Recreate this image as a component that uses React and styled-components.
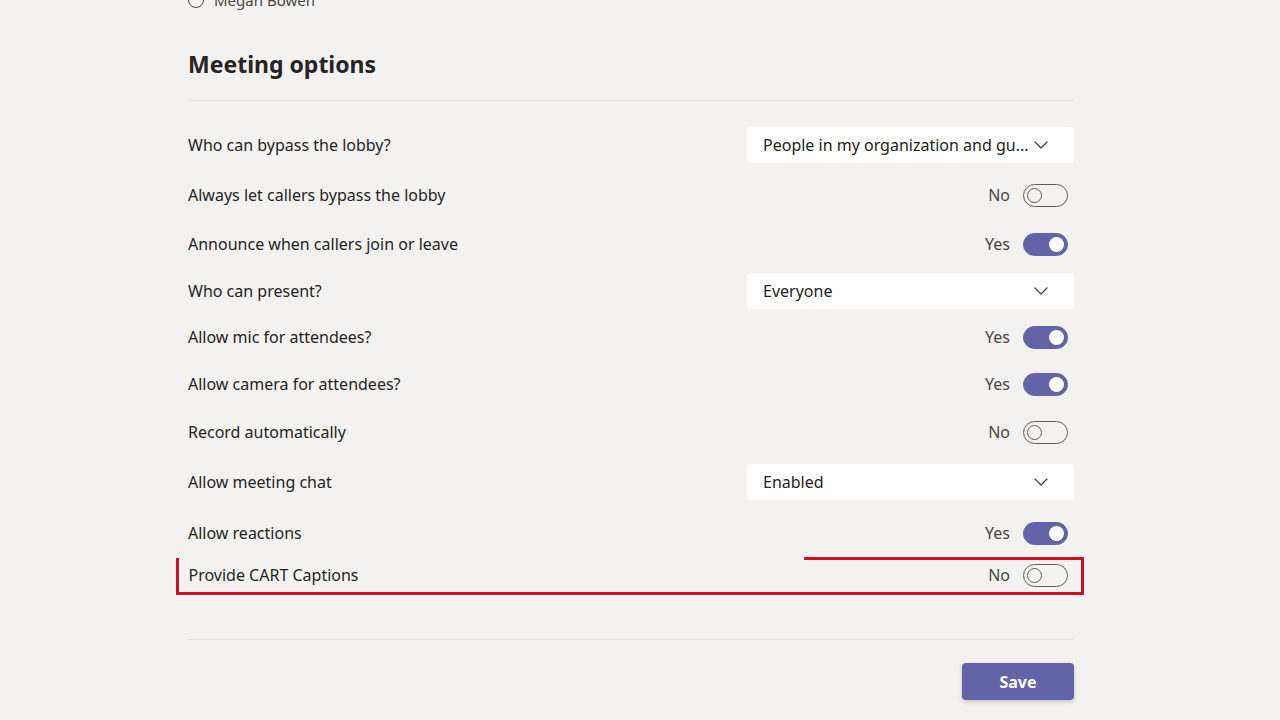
import React from 'react';
import styled, { createGlobalStyle } from 'styled-components';

const GlobalStyle = createGlobalStyle`
  html, body {
    margin: 0;
    padding: 0;
    background: #f3f2f1;
    font-family: "Noto Sans", "Open Sans", sans-serif;
    color: #252423;
  }
`

const Page = styled.div`
  width: 1280px;
  height: 720px;
  overflow: hidden;
  box-sizing: border-box;
  padding-left: 188px;
`

const Column = styled.div`
  width: 886px;
  display: flex;
  flex-direction: column;
  margin-top: -12px;
`

const Person = styled.div`
  display: flex;
  align-items: center;
  gap: 10px;
  height: 24px;
  font-size: 15px;
  color: #484644;
`

const Circle = styled.span`
  width: 14px;
  height: 14px;
  border: 1.5px solid #484644;
  border-radius: 50%;
`

const Title = styled.h1`
  margin: 36px 0 0;
  font-size: 23px;
  font-weight: 700;
  line-height: 32px;
`

const Divider = styled.div`
  height: 1px;
  background: #e6e4e2;
  margin-top: ${p => p.$top}px;
`

const List = styled.div`
  display: flex;
  flex-direction: column;
  margin-top: 19px;
`

const Row = styled.div`
  height: ${p => p.$h}px;
  display: flex;
  align-items: center;
  justify-content: space-between;
  font-size: 16px;
`

const Highlight = styled.div`
  position: relative;
  margin: 0 -10px 0 -12px;
  padding: 0 7px 0 9.5px;
  border: 3px solid #d0101e;
  border-top: none;
  &::before {
    content: "";
    position: absolute;
    top: -1px;
    right: -3px;
    width: 280px;
    height: 3px;
    background: #d0101e;
  }
`

const Label = styled.span`
  color: #252423;
`

const Select = styled.div`
  width: 327px;
  height: 36px;
  box-sizing: border-box;
  background: #ffffff;
  border-radius: 4px;
  display: flex;
  align-items: center;
  justify-content: space-between;
  padding: 0 26px 0 16px;
  font-size: 16px;
  color: #252423;
`

const SwitchWrap = styled.div`
  display: flex;
  align-items: center;
  gap: 13px;
  padding-right: 6px;
`

const SwitchText = styled.span`
  color: #484644;
  font-size: 16px;
`

const Track = styled.span`
  width: 45px;
  height: 23px;
  box-sizing: border-box;
  border-radius: 12px;
  display: flex;
  align-items: center;
  justify-content: ${p => (p.$on ? 'flex-end' : 'flex-start')};
  padding: 0 3px;
  background: ${p => (p.$on ? '#6264a7' : 'transparent')};
  border: 1px solid ${p => (p.$on ? '#6264a7' : '#605e5c')};
`

const Knob = styled.span`
  width: 15px;
  height: 15px;
  box-sizing: border-box;
  border-radius: 50%;
  background: ${p => (p.$on ? '#ffffff' : 'transparent')};
  border: ${p => (p.$on ? 'none' : '1px solid #605e5c')};
`

const Footer = styled.div`
  display: flex;
  justify-content: flex-end;
  margin-top: 23px;
`

const SaveButton = styled.button`
  width: 112px;
  height: 37px;
  border: none;
  border-radius: 4px;
  background: #6264a7;
  color: #ffffff;
  font-family: inherit;
  font-size: 16px;
  font-weight: 700;
  box-shadow: 0 2px 4px rgba(0, 0, 0, 0.18);
`

const Chevron = () => (
  <svg width="14" height="8" viewBox="0 0 14 8" fill="none">
    <path d="M1 1l6 6 6-6" stroke="#484644" strokeWidth="1.3" strokeLinecap="round" strokeLinejoin="round" />
  </svg>
)

const Toggle = ({ on }) => (
  <SwitchWrap>
    <SwitchText>{on ? 'Yes' : 'No'}</SwitchText>
    <Track $on={on}>
      <Knob $on={on} />
    </Track>
  </SwitchWrap>
)

const options = [
  { label: 'Who can bypass the lobby?', select: 'People in my organization and gu...', h: 50 },
  { label: 'Always let callers bypass the lobby', on: false, h: 50 },
  { label: 'Announce when callers join or leave', on: true, h: 48 },
  { label: 'Who can present?', select: 'Everyone', h: 46 },
  { label: 'Allow mic for attendees?', on: true, h: 46 },
  { label: 'Allow camera for attendees?', on: true, h: 48 },
  { label: 'Record automatically', on: false, h: 48 },
  { label: 'Allow meeting chat', select: 'Enabled', h: 52 },
  { label: 'Allow reactions', on: true, h: 50 },
]

const App = () => {
  return (
    <Page>
      <GlobalStyle />
      <Column>
        <Person>
          <Circle />
          Megan Bowen
        </Person>
        <Title>Meeting options</Title>
        <Divider $top={20} />
        <List>
          {options.map(o => (
            <Row key={o.label} $h={o.h}>
              <Label>{o.label}</Label>
              {o.select ? (
                <Select>
                  {o.select}
                  <Chevron />
                </Select>
              ) : (
                <Toggle on={o.on} />
              )}
            </Row>
          ))}
          <Highlight>
            <Row $h={34}>
              <Label>Provide CART Captions</Label>
              <Toggle on={false} />
            </Row>
          </Highlight>
        </List>
        <Divider $top={44} />
        <Footer>
          <SaveButton>Save</SaveButton>
        </Footer>
      </Column>
    </Page>
  );
}

export default App;
